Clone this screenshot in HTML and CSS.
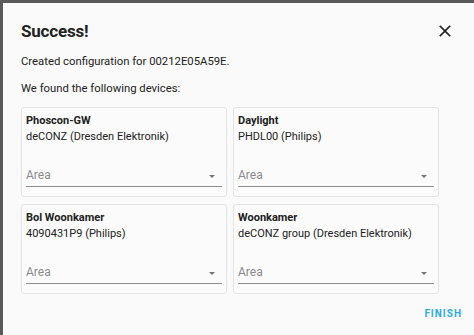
FILE: index.html
```html
<!DOCTYPE html>
<html>
<head>
    <title>Success!</title>
    <meta charset="UTF-8"/>
    <link rel="stylesheet" href="styles.css">
</head>
<body>
    <div class="dialog">
        <div class="dialog-header">
            <h2 class="dialog-title">Success!</h2>
            <button class="close-button" aria-label="Close">
                <svg width="20" height="20" viewBox="0 0 24 24"><path d="M19,6.41L17.59,5L12,10.59L6.41,5L5,6.41L10.59,12L5,17.59L6.41,19L12,13.41L17.59,19L19,17.59L13.41,12L19,6.41Z"/></svg>
            </button>
        </div>
        <p class="message">Created configuration for 00212E05A59E.</p>
        <p class="message">We found the following devices:</p>
        <div class="devices">
            <div class="device">
                <div class="device-name">Phoscon-GW</div>
                <div class="device-model">deCONZ (Dresden Elektronik)</div>
                <div class="area-select"><span>Area</span><span class="arrow"></span></div>
            </div>
            <div class="device">
                <div class="device-name">Daylight</div>
                <div class="device-model">PHDL00 (Philips)</div>
                <div class="area-select"><span>Area</span><span class="arrow"></span></div>
            </div>
            <div class="device">
                <div class="device-name">Bol Woonkamer</div>
                <div class="device-model">4090431P9 (Philips)</div>
                <div class="area-select"><span>Area</span><span class="arrow"></span></div>
            </div>
            <div class="device">
                <div class="device-name">Woonkamer</div>
                <div class="device-model">deCONZ group (Dresden Elektronik)</div>
                <div class="area-select"><span>Area</span><span class="arrow"></span></div>
            </div>
        </div>
        <div class="dialog-actions">
            <button class="finish-button">Finish</button>
        </div>
    </div>
</body>
</html>
```

FILE: styles.css
```css
html {
    height: 100%;
}

body {
    height: 100%;
    margin: 0;
    background-color: #5a5a5a;
    font-family: Roboto, "Liberation Sans", sans-serif;
    color: #212121;
    overflow: hidden;
}

.dialog {
    box-sizing: border-box;
    height: calc(100% - 3px);
    margin: 3px 0 0 3px;
    padding: 16px 0 0 18px;
    background-color: #fafafa;
}

.dialog-header {
    display: flex;
    align-items: center;
    justify-content: space-between;
    height: 24px;
    margin-bottom: 11px;
}

.dialog-title {
    margin: 0;
    font-size: 17px;
    font-weight: 700;
    letter-spacing: -0.2px;
    line-height: 24px;
}

.close-button {
    display: flex;
    margin-right: 19px;
    padding: 0;
    border: none;
    background: none;
    fill: #212121;
}

.message {
    margin: 0 0 12px;
    font-size: 11.3px;
    line-height: 15px;
}

.message + .message {
    margin-bottom: 11px;
}

.devices {
    display: grid;
    grid-template-columns: 206px 206px;
    grid-auto-rows: 90px;
    gap: 7px 6px;
}

.device {
    display: flex;
    flex-direction: column;
    padding: 5px 4px 0;
    border: 1px solid #e4e4e4;
    border-radius: 3px;
    background-color: #fbfbfb;
}

.device-name {
    font-size: 11px;
    font-weight: 700;
    line-height: 16px;
}

.device-model {
    font-size: 11px;
    line-height: 16px;
}

.area-select {
    display: flex;
    align-items: center;
    justify-content: space-between;
    margin-top: 22px;
    padding: 0 0 3px 0;
    border-bottom: 1px solid #8e8e8e;
    color: #8a8a8a;
    font-size: 12px;
    line-height: 16px;
}

.arrow {
    width: 0;
    height: 0;
    margin: 2px 7px 0 0;
    border-left: 3px solid transparent;
    border-right: 3px solid transparent;
    border-top: 3px solid #757575;
}

.dialog-actions {
    display: flex;
    justify-content: flex-end;
    padding: 10px 8px 0 0;
}

.finish-button {
    padding: 4px;
    border: none;
    background: none;
    color: #2eaae2;
    font-family: Roboto, "Liberation Sans", sans-serif;
    font-size: 10px;
    font-weight: 700;
    letter-spacing: 1px;
    text-transform: uppercase;
}
```
